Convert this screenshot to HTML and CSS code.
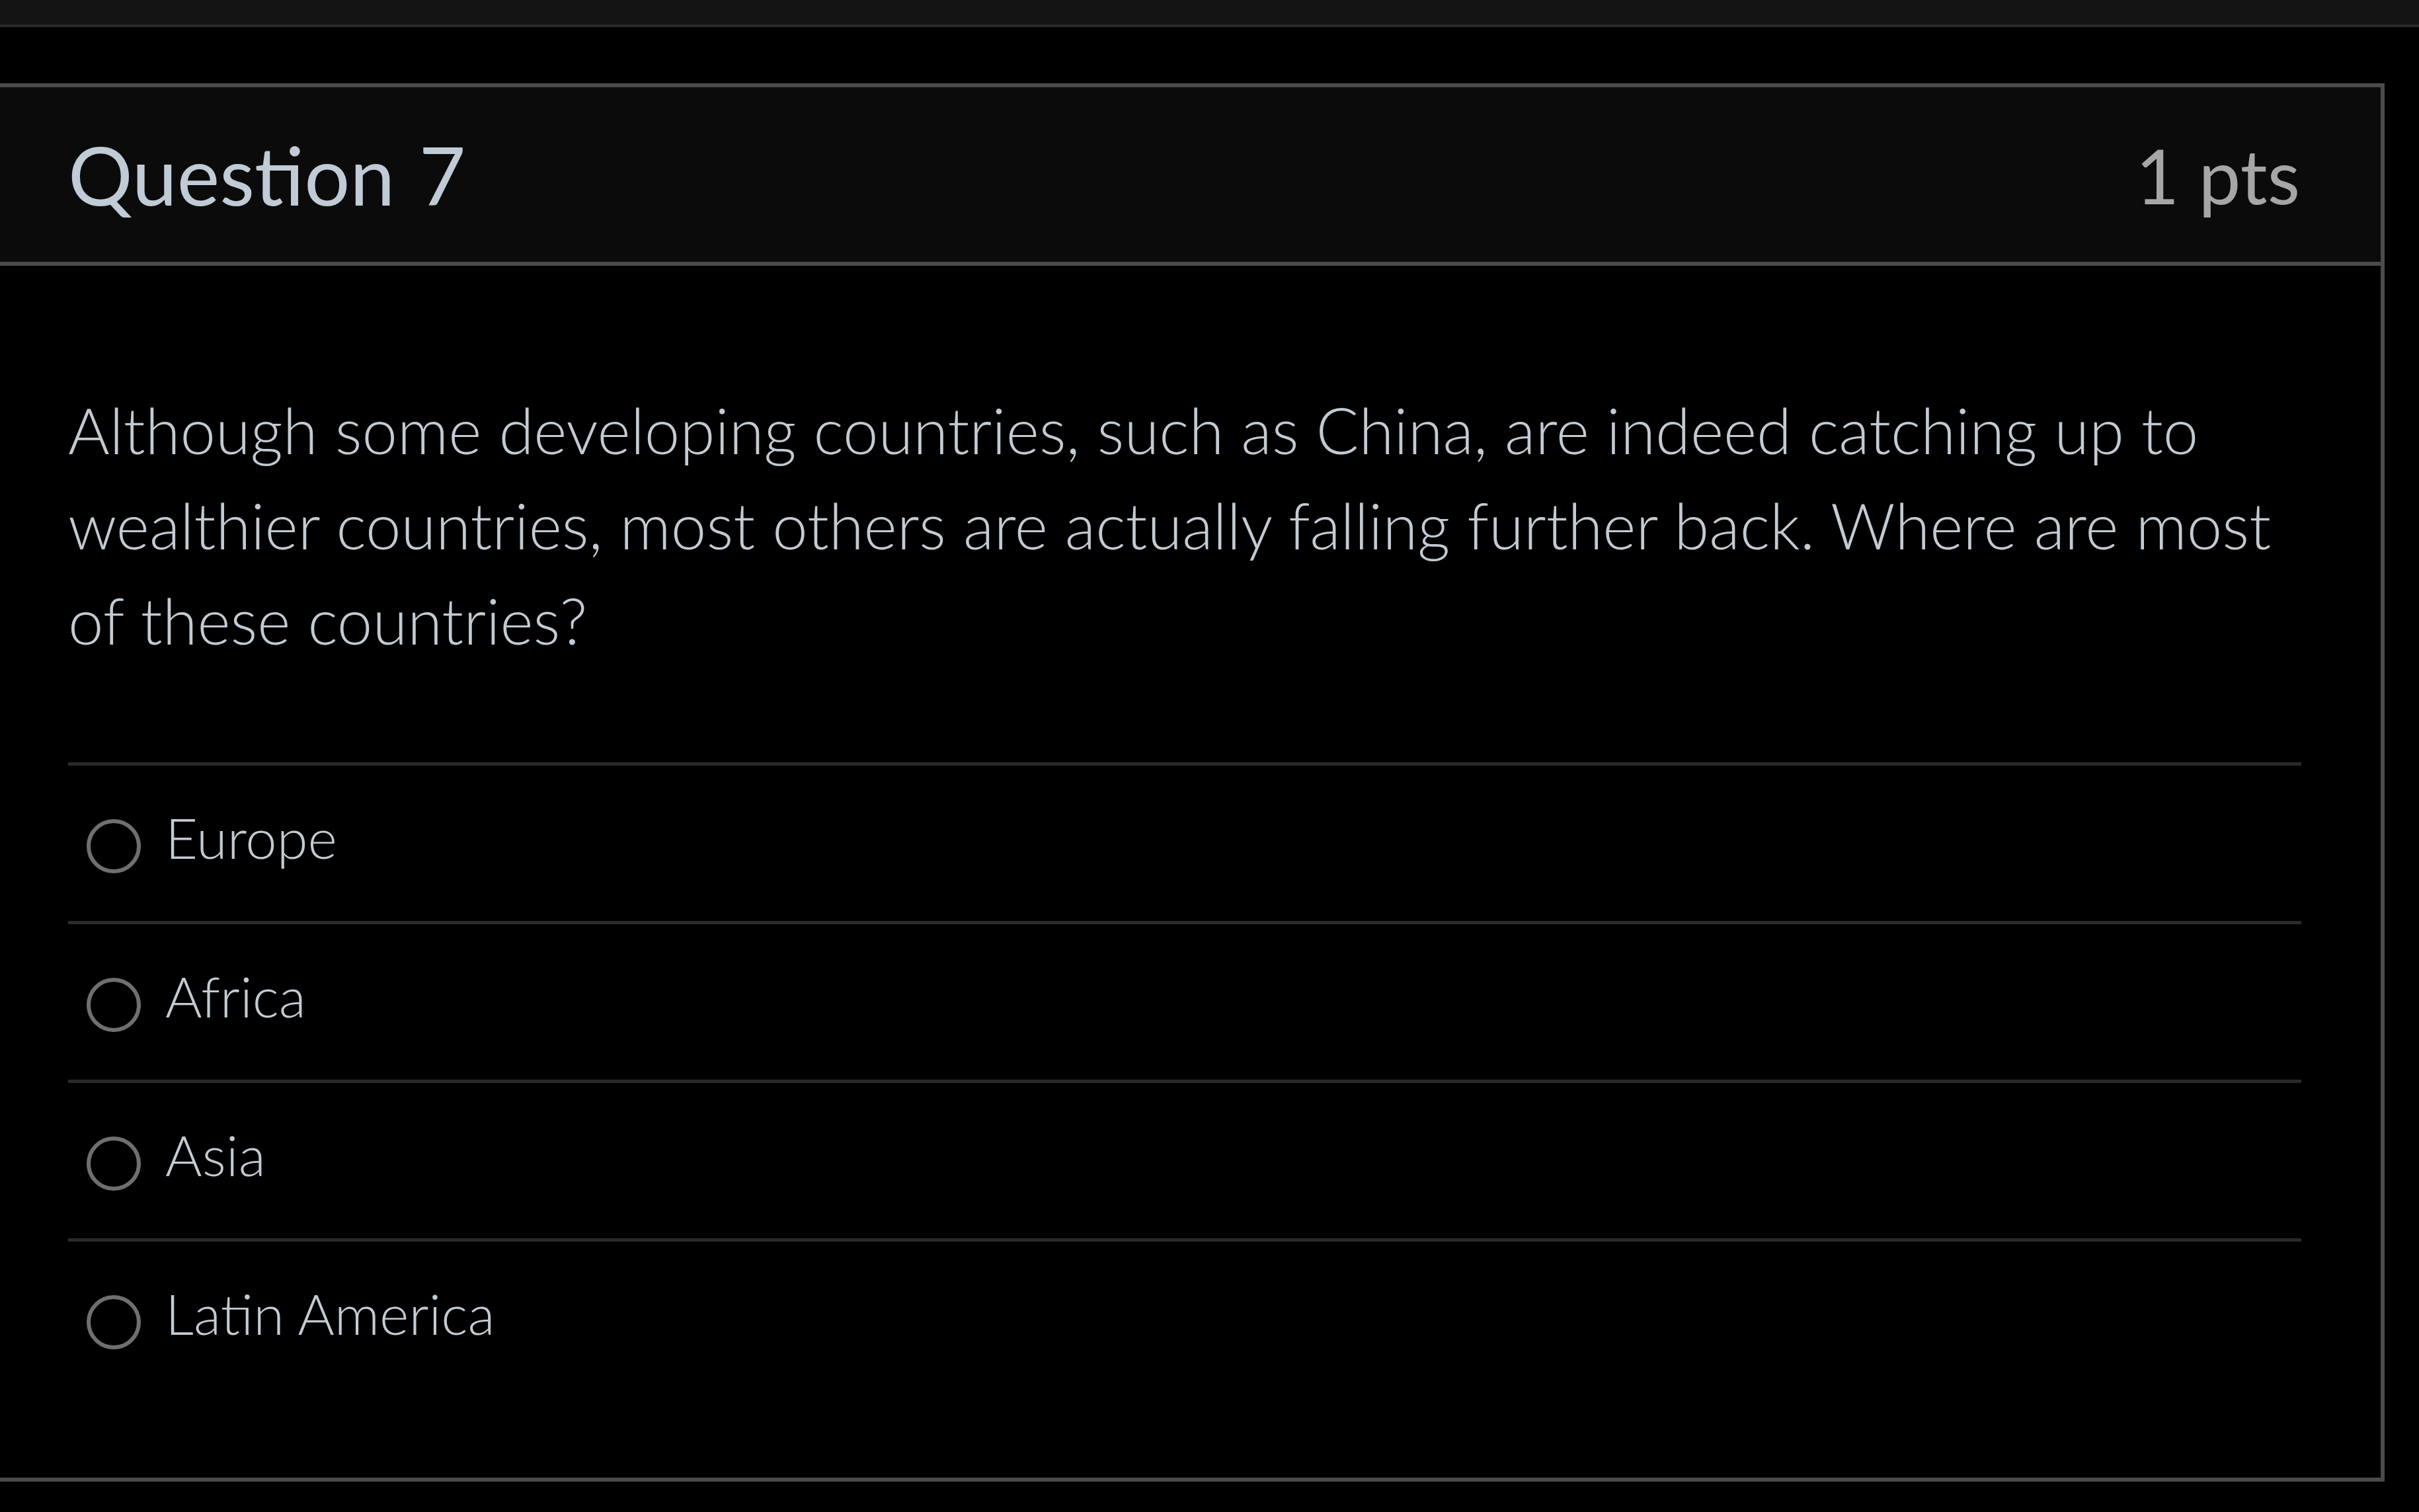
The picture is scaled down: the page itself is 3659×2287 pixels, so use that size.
FILE: index.html
```html
<!DOCTYPE html>
<html lang="en">
<head>
    <meta charset="UTF-8">
    <meta name="viewport" content="width=device-width, initial-scale=1.0">
    <title>Question 7</title>
    <link rel="stylesheet" href="styles.css">
</head>

<body>
    <div class="topbar"></div>

    <div class="question">
        <div class="header">
            <span class="question-name">Question 7</span>
            <span class="points">1 pts</span>
        </div>

        <div class="content">
            <p class="question-text">Although some developing countries, such as China, are indeed catching up to wealthier countries, most others are actually falling further back. Where are most of these countries?</p>

            <div class="answers">
                <label class="answer">
                    <span class="radio"></span>
                    <span class="answer-text">Europe</span>
                </label>
                <label class="answer">
                    <span class="radio"></span>
                    <span class="answer-text">Africa</span>
                </label>
                <label class="answer">
                    <span class="radio"></span>
                    <span class="answer-text">Asia</span>
                </label>
                <label class="answer">
                    <span class="radio"></span>
                    <span class="answer-text">Latin America</span>
                </label>
            </div>
        </div>
    </div>
</body>
</html>
```

FILE: styles.css
```css
body {
    margin: 0;
    background-color: #000;
    font-family: 'Lato', 'Noto Sans', sans-serif;
    font-weight: 300;
    color: #c2cbd3;
    overflow: hidden;
}

.topbar {
    height: 37px;
    background-color: #141414;
    border-bottom: 4px solid #2a2a2a;
}

.question {
    box-sizing: border-box;
    width: 3627px;
    margin-top: 85px;
    margin-left: -20px;
    border: 6px solid #4b4b4b;
}

.header {
    box-sizing: border-box;
    height: 270px;
    display: flex;
    align-items: center;
    justify-content: space-between;
    padding: 0 122px 0 117px;
    background-color: #0b0b0b;
    border-bottom: 6px solid #4b4b4b;
    font-weight: 400;
}

.question-name {
    font-size: 122px;
    word-spacing: 5px;
    color: #c0cbd6;
}

.points {
    font-size: 114px;
    color: #a6a6a6;
}

.content {
    padding: 176px 120px 122px 117px;
}

.question-text {
    margin: 0;
    font-size: 96px;
    line-height: 144px;
}

.answers {
    margin-top: 143px;
}

.answer {
    box-sizing: border-box;
    height: 240px;
    display: flex;
    align-items: flex-start;
    padding-top: 57px;
    border-top: 5px solid #2a2a2a;
    font-size: 85px;
}

.radio {
    box-sizing: border-box;
    flex: none;
    width: 82px;
    height: 82px;
    margin: 24px 37px 0 28px;
    border: 6px solid #6f6f6f;
    border-radius: 50%;
}

.answer-text {
    line-height: normal;
}
```
